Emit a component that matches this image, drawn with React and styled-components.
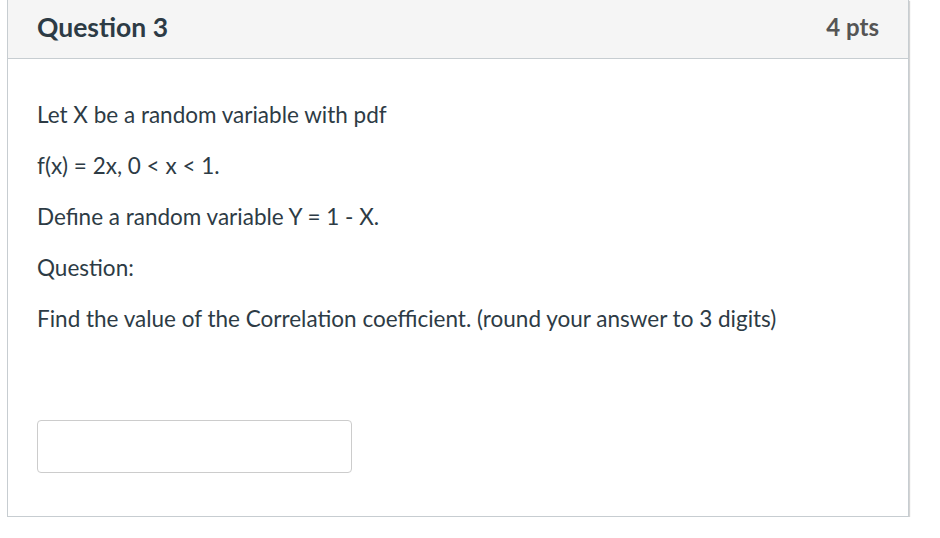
import styled, { createGlobalStyle } from "styled-components";

const Global = createGlobalStyle`
  body {
    margin: 0;
    background: #fff;
    font-family: Lato, "Open Sans", sans-serif;
    color: #2d3b45;
  }
`;

const Page = styled.div`
  padding: 0 31px 0 7px;
`;

const Card = styled.div`
  border: 1px solid #c7cdd1;
  border-top: none;
  box-shadow: 1px 1px 1px #d4d4d4;
  background: #fff;
  height: 517px;
  box-sizing: border-box;
`;

const Header = styled.div`
  display: flex;
  justify-content: space-between;
  align-items: center;
  height: 59px;
  padding: 0 29px 5px 29px;
  box-sizing: border-box;
  background: #f5f5f5;
  border-bottom: 1px solid #c7cdd1;
`;

const Title = styled.h2`
  margin: 0;
  font-size: 26.5px;
  font-weight: 700;
  color: #2d3b45;
`;

const Points = styled.span`
  font-size: 24px;
  font-weight: 700;
  color: #555;
`;

const Body = styled.div`
  padding: 42px 29px 0;
`;

const Text = styled.p`
  margin: 0 0 ${(p) => p.$gap || 24}px;
  font-size: 22.5px;
  line-height: 27px;
  color: #2d3b45;
`;

const Answer = styled.input`
  display: block;
  margin-top: 88px;
  width: 315px;
  height: 53px;
  box-sizing: border-box;
  border: 1px solid #ccc;
  border-radius: 4px;
  background: #fff;
`;

export default function App() {
  return (
    <>
      <Global />
      <Page>
        <Card>
          <Header>
            <Title>Question 3</Title>
            <Points>4 pts</Points>
          </Header>
          <Body>
            <Text>Let X be a random variable with pdf</Text>
            <Text>f(x) = 2x, 0 &lt; x &lt; 1.</Text>
            <Text>Define a random variable Y = 1 - X.</Text>
            <Text>Question:</Text>
            <Text $gap={0}>Find the value of the Correlation coefficient. (round your answer to 3 digits)</Text>
            <Answer type="text" />
          </Body>
        </Card>
      </Page>
    </>
  );
}
